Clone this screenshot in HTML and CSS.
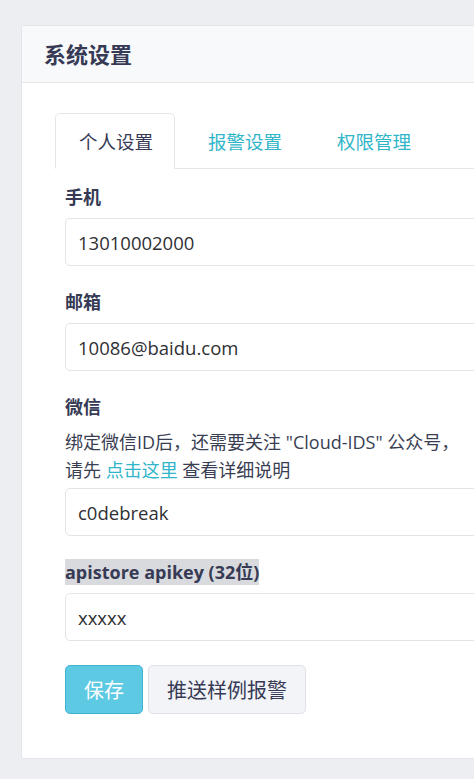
FILE: index.html
```html
<!DOCTYPE html>
<html lang="zh-CN">
<head>
    <meta charset="UTF-8">
    <meta name="viewport" content="width=device-width, initial-scale=1.0">
    <title>系统设置</title>
    <link rel="stylesheet" href="styles.css">
</head>
<body>
    <div class="panel">
        <div class="panel-heading">系统设置</div>
        <div class="panel-body">
            <ul class="tabs">
                <li class="tab active">个人设置</li>
                <li class="tab">报警设置</li>
                <li class="tab">权限管理</li>
            </ul>
            <form class="tab-content">
                <div class="field">
                    <label class="field-label">手机</label>
                    <input class="field-input" type="text" value="13010002000">
                </div>
                <div class="field">
                    <label class="field-label">邮箱</label>
                    <input class="field-input" type="text" value="10086@baidu.com">
                </div>
                <div class="field">
                    <label class="field-label">微信</label>
                    <p class="help">绑定微信ID后，还需要关注 "Cloud-IDS" 公众号，<br>请先 <a href="#">点击这里</a> 查看详细说明</p>
                    <input class="field-input" type="text" value="c0debreak">
                </div>
                <div class="field">
                    <label class="field-label"><span class="selected">apistore apikey (32位)</span></label>
                    <input class="field-input" type="text" value="xxxxx">
                </div>
                <div class="actions">
                    <button type="button" class="btn btn-save">保存</button>
                    <button type="button" class="btn btn-push">推送样例报警</button>
                </div>
            </form>
        </div>
    </div>
</body>
</html>
```

FILE: styles.css
```css
body {
    margin: 0;
    padding: 25px 0 0 21px;
    background: #eceef2;
    font-family: 'Open Sans', 'Noto Sans CJK SC', sans-serif;
    color: #363a55;
    overflow: hidden;
}

.panel {
    width: 520px;
    background: #fff;
    border: 1px solid #e2e5ea;
    border-radius: 3px;
}

.panel-heading {
    height: 56px;
    line-height: 56px;
    padding: 0 22px;
    background: #f8f9fb;
    border-bottom: 1px solid #e6e8ec;
    font-size: 22px;
    font-weight: 700;
    color: #363a55;
}

.panel-body {
    padding: 30px 0 44px 33px;
}

.tabs {
    display: flex;
    gap: 9px;
    list-style: none;
    margin: 0;
    padding: 0;
    border-bottom: 1px solid #e4e6ea;
}

.tab {
    width: 120px;
    height: 56px;
    line-height: 56px;
    padding-left: 23px;
    box-sizing: border-box;
    font-size: 18.5px;
    color: #30b5c9;
    border: 1px solid transparent;
    border-radius: 5px 5px 0 0;
    margin-bottom: -1px;
}

.tab.active {
    color: #363a55;
    background: #fff;
    border-color: #e4e6ea #e4e6ea #fff;
}

.tab-content {
    padding: 16px 0 0 10px;
}

.field {
    margin-bottom: 24px;
}

.field-label {
    display: block;
    height: 24px;
    line-height: 24px;
    margin-bottom: 9px;
    font-size: 18px;
    font-weight: 700;
    color: #363a55;
}

.selected {
    background: #d9dadd;
    padding: 1px 0;
}

.help {
    margin: 0 0 4px;
    font-size: 18px;
    line-height: 28px;
    color: #3a3e52;
}

.help a {
    color: #30b5c9;
    text-decoration: none;
}

.field-input {
    display: block;
    width: 100%;
    height: 48px;
    box-sizing: border-box;
    padding: 0 12px;
    border: 1px solid #e2e4e8;
    border-radius: 5px;
    font-family: 'Open Sans', 'Noto Sans CJK SC', sans-serif;
    font-size: 18.5px;
    color: #2f3034;
    outline: none;
}

.actions {
    display: flex;
    gap: 5px;
}

.btn {
    height: 49px;
    padding: 0 18px;
    border-radius: 5px;
    font-family: 'Open Sans', 'Noto Sans CJK SC', sans-serif;
    font-size: 20px;
    cursor: pointer;
}

.btn-save {
    background: #5ec9e3;
    border: 1px solid #40b3cf;
    color: #fff;
}

.btn-push {
    background: #f3f4f7;
    border: 1px solid #dfe2e7;
    color: #363a55;
}
```
